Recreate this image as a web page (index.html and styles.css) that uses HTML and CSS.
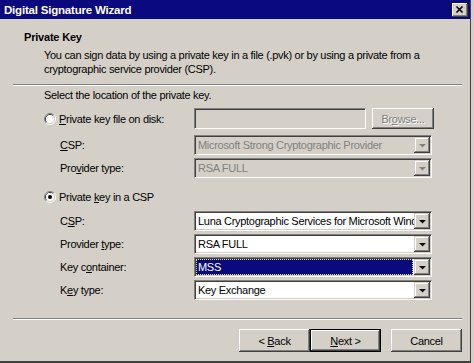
FILE: index.html
```html
<html lang="en">
  <head>
    <meta charset="UTF-8" />
    <meta name="viewport" content="width=device-width, initial-scale=1.0" />
    <title>Digital Signature Wizard</title>
    <link rel="stylesheet" href="styles.css">
  </head>
  <body>
    <div class="window">
      <div class="titlebar">
        <span class="title">Digital Signature Wizard</span>
        <span class="close-btn">
          <svg width="16" height="14" viewBox="0 0 16 14">
            <path d="M4.5 3.5 L10.5 9.5 M10.5 3.5 L4.5 9.5" stroke="#000" stroke-width="1.7" fill="none" />
          </svg>
        </span>
      </div>

      <div class="header">
        <div class="heading">Private Key</div>
        <div class="subtitle">
          You can sign data by using a private key in a file (.pvk) or by using a private from a<br />
          cryptographic service provider (CSP).
        </div>
      </div>

      <div class="etched"></div>

      <div class="content">
        <div class="intro">Select the location of the private key.</div>

        <div class="row radio-row file-row">
          <span class="radio">
            <svg width="12" height="12" viewBox="0 0 12 12">
              <path d="M2.11 9.89 A5.5 5.5 0 0 1 9.89 2.11" stroke="#808080" fill="none" />
              <path d="M9.89 2.11 A5.5 5.5 0 0 1 2.11 9.89" stroke="#fff" fill="none" />
              <path d="M2.82 9.18 A4.5 4.5 0 0 1 9.18 2.82" stroke="#404040" fill="none" />
              <path d="M9.18 2.82 A4.5 4.5 0 0 1 2.82 9.18" stroke="#d4d0c8" fill="none" />
              <circle cx="6" cy="6" r="4" fill="#fff" />
            </svg>
          </span>
          <span class="radio-label"><u>P</u>rivate key file on disk:</span>
          <span class="textbox disabled"></span>
          <span class="btn browse-btn disabled"><span>Br<u>o</u>wse...</span></span>
        </div>

        <div class="row after-file">
          <span class="label"><u>C</u>SP:</span>
          <div class="combo disabled">
            <span class="combo-text">Microsoft Strong Cryptographic Provider</span>
            <span class="drop"><svg width="16" height="16" viewBox="0 0 16 16"><polygon points="5,7 12,7 8.5,10.5" /></svg></span>
          </div>
        </div>
        <div class="row">
          <span class="label">Pro<u>v</u>ider type:</span>
          <div class="combo disabled">
            <span class="combo-text">RSA FULL</span>
            <span class="drop"><svg width="16" height="16" viewBox="0 0 16 16"><polygon points="5,7 12,7 8.5,10.5" /></svg></span>
          </div>
        </div>

        <div class="row radio-row csp-row">
          <span class="radio">
            <svg width="12" height="12" viewBox="0 0 12 12">
              <path d="M2.11 9.89 A5.5 5.5 0 0 1 9.89 2.11" stroke="#808080" fill="none" />
              <path d="M9.89 2.11 A5.5 5.5 0 0 1 2.11 9.89" stroke="#fff" fill="none" />
              <path d="M2.82 9.18 A4.5 4.5 0 0 1 9.18 2.82" stroke="#404040" fill="none" />
              <path d="M9.18 2.82 A4.5 4.5 0 0 1 2.82 9.18" stroke="#d4d0c8" fill="none" />
              <circle cx="6" cy="6" r="4" fill="#fff" />
              <circle cx="6" cy="6" r="2" fill="#000" />
            </svg>
          </span>
          <span class="radio-label">Private <u>k</u>ey in a CSP</span>
        </div>

        <div class="row first-combo">
          <span class="label">C<u>S</u>P:</span>
          <div class="combo">
            <span class="combo-text">Luna Cryptographic Services for Microsoft Windows</span>
            <span class="drop"><svg width="16" height="16" viewBox="0 0 16 16"><polygon points="5,7 12,7 8.5,10.5" /></svg></span>
          </div>
        </div>
        <div class="row">
          <span class="label">Provider <u>t</u>ype:</span>
          <div class="combo">
            <span class="combo-text">RSA FULL</span>
            <span class="drop"><svg width="16" height="16" viewBox="0 0 16 16"><polygon points="5,7 12,7 8.5,10.5" /></svg></span>
          </div>
        </div>
        <div class="row">
          <span class="label">Key c<u>o</u>ntainer:</span>
          <div class="combo">
            <span class="combo-text selected">MSS</span>
            <span class="drop"><svg width="16" height="16" viewBox="0 0 16 16"><polygon points="5,7 12,7 8.5,10.5" /></svg></span>
          </div>
        </div>
        <div class="row">
          <span class="label">K<u>e</u>y type:</span>
          <div class="combo">
            <span class="combo-text">Key Exchange</span>
            <span class="drop"><svg width="16" height="16" viewBox="0 0 16 16"><polygon points="5,7 12,7 8.5,10.5" /></svg></span>
          </div>
        </div>
      </div>

      <div class="etched bottom-line"></div>

      <div class="buttons">
        <span class="btn"><span>&lt; <u>B</u>ack</span></span>
        <span class="btn default-btn"><span><u>N</u>ext &gt;</span></span>
        <span class="btn cancel-btn"><span>Cancel</span></span>
      </div>
    </div>
  </body>
</html>
```

FILE: styles.css
```css
body {
  margin: 0;
  background-color: #d4d0c8;
  font-family: "Liberation Sans", Arial, sans-serif;
  font-size: 11px;
  letter-spacing: -0.3px;
  color: #000;
}
.window {
  width: 470px;
  height: 361px;
  background-color: #d4d0c8;
  border-right: 1px solid #404040;
  border-bottom: 2px solid #404040;
  overflow: hidden;
}
.titlebar {
  height: 19px;
  background-color: #0a0a7e;
  display: flex;
  align-items: center;
  justify-content: space-between;
  padding: 0 2px 0 4px;
}
.title {
  color: white;
  font-weight: bold;
  font-size: 11.5px;
  letter-spacing: -0.2px;
}
.close-btn {
  width: 16px;
  height: 14px;
  background-color: #d4d0c8;
  box-shadow: inset -1px -1px #404040, inset 1px 1px #fff, inset -2px -2px #808080;
  display: flex;
}
.header {
  padding: 11px 0 0 24px;
}
.heading {
  font-weight: bold;
  line-height: 14px;
  letter-spacing: -0.2px;
}
.subtitle {
  margin: 4px 0 0 20px;
  line-height: 14px;
}
.etched {
  margin: 8px 8px 0 13px;
  border-top: 1px solid #808080;
  border-bottom: 1px solid #fff;
  height: 0;
}
.content {
  padding-left: 44px;
}
.intro {
  margin-top: 2px;
  line-height: 14px;
}
.row {
  display: flex;
  align-items: center;
  height: 20px;
  margin-top: 3px;
}
.label {
  width: 150px;
  padding-left: 16px;
  box-sizing: border-box;
}
.radio-row {
  height: 14px;
}
.file-row {
  height: 21px;
  margin-top: 6px;
}
.after-file {
  margin-top: 6px;
}
.csp-row {
  margin-top: 12px;
}
.first-combo {
  margin-top: 7px;
}
.radio {
  width: 12px;
  height: 12px;
  display: flex;
}
.radio-label {
  margin-left: 3px;
  width: 135px;
}
.textbox {
  width: 172px;
  height: 21px;
  box-sizing: border-box;
  border: 1px solid;
  border-color: #808080 #fff #fff #808080;
  box-shadow: inset 1px 1px #404040, inset -1px -1px #d4d0c8;
  background-color: #fff;
}
.textbox.disabled {
  background-color: #d4d0c8;
}
.combo {
  width: 238px;
  height: 20px;
  box-sizing: border-box;
  border: 1px solid;
  border-color: #808080 #fff #fff #808080;
  box-shadow: inset 1px 1px #404040, inset -1px -1px #d4d0c8;
  background-color: #fff;
  display: flex;
  padding: 1px;
}
.combo-text {
  flex: 1;
  padding-left: 2px;
  line-height: 16px;
  white-space: nowrap;
  overflow: hidden;
}
.combo-text.selected {
  background-color: #0a0a7e;
  color: white;
  outline: 1px dotted #e8e890;
  outline-offset: -1px;
  margin-right: 1px;
}
.drop {
  width: 16px;
  height: 16px;
  flex: none;
  background-color: #d4d0c8;
  box-shadow: inset -1px -1px #404040, inset 1px 1px #d4d0c8, inset -2px -2px #808080, inset 2px 2px #fff;
  display: flex;
}
.combo.disabled {
  background-color: #d4d0c8;
}
.combo.disabled .combo-text {
  color: #808080;
}
.combo.disabled polygon {
  fill: #808080;
}
.btn {
  width: 71px;
  height: 23px;
  box-sizing: border-box;
  background-color: #d4d0c8;
  box-shadow: inset -1px -1px #404040, inset 1px 1px #fff, inset -2px -2px #808080;
  display: flex;
  align-items: center;
  justify-content: center;
}
.btn.disabled {
  color: #808080;
  text-shadow: 1px 1px #fff;
}
.browse-btn {
  width: 62px;
  height: 21px;
  margin-left: 6px;
}
.bottom-line {
  margin-top: 18px;
}
.buttons {
  display: flex;
  justify-content: flex-end;
  margin: 9px 8px 0 0;
}
.default-btn {
  border: 1px solid #000;
}
.cancel-btn {
  margin-left: 10px;
}
```
